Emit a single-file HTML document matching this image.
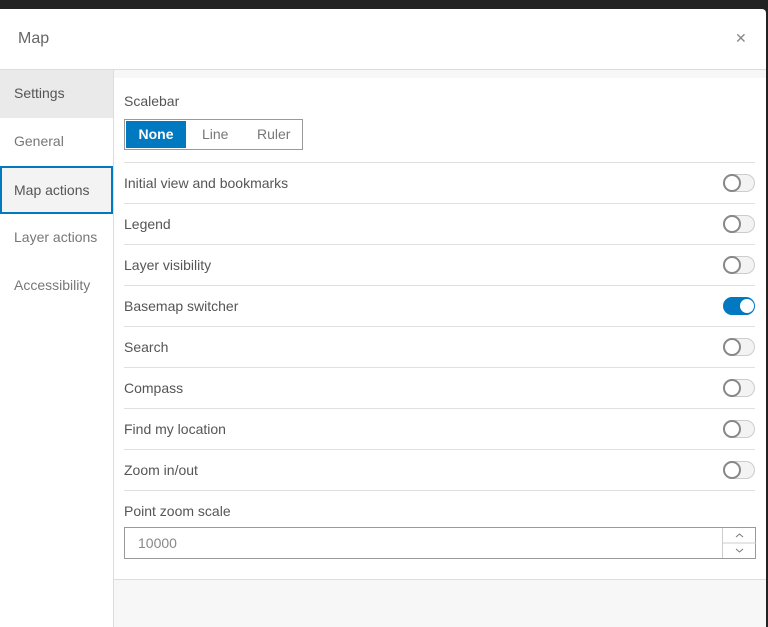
<!DOCTYPE html><html style="overflow:hidden;height:627px"><head><style>
body{margin:0;width:768px;height:627px;background:#222;font-family:"Liberation Sans",sans-serif;overflow:hidden;position:relative;color:#4a4a4a}
.dlg{position:absolute;left:0;top:9px;width:766px;height:618px;background:#fff;border-top-right-radius:4px;overflow:hidden}
.hdr{position:absolute;left:0;top:0;width:766px;height:60px;border-bottom:1px solid #ddd}
.hdr .t{position:absolute;left:18px;top:21px;font-size:16px;color:#666}
.hdr .x{position:absolute;left:735px;top:21px;font-size:14px;color:#888}
.side{position:absolute;left:0;top:61px;width:113px;height:557px;border-right:1px solid #ddd}
.side div{height:48px;line-height:46px;padding-left:14px;font-size:14px;color:#777;box-sizing:border-box}
.strip{position:absolute;left:114px;top:61px;width:652px;height:8px;background:#f7f7f7}
.foot{position:absolute;left:114px;top:570px;width:652px;height:48px;background:#f7f7f7;border-top:1px solid #ddd}
.c{position:absolute;left:124px;font-size:14px;color:#555}
.row{position:absolute;left:124px;width:631px;height:41px;border-top:1px solid #e0e0e0;font-size:14px;color:#555}
.row span{position:absolute;left:0;top:12px}
.tg{position:absolute;right:0;top:11px;width:30px;height:16px;border:1px solid #ccc;border-radius:9px;background:#f3f3f3}
.tg:before{content:"";position:absolute;left:-1px;top:-1px;width:14px;height:14px;border:2px solid #888;border-radius:50%;background:#fff}
.tg.on{background:#0079c1;border-color:#0079c1}
.tg.on:before{left:16px;top:1px;width:12px;height:12px;border:1px solid #fff}
</style></head><body>
<div class="dlg">
<div class="hdr"><div class="t">Map</div><div class="x">✕</div></div>
<div class="side">
<div style="background:#eaeaea;color:#555">Settings</div>
<div>General</div>
<div style="border:2px solid #0079c1;background:#f3f3f3;color:#555;line-height:44px;padding-left:12px">Map actions</div>
<div>Layer actions</div>
<div>Accessibility</div>
</div>
<div class="strip"></div>
<div class="c" style="top:84px">Scalebar</div>
<div style="position:absolute;left:124px;top:110px;width:177px;height:29px;border:1px solid #999;font-size:14px">
<div style="position:absolute;left:1px;top:1px;width:60px;height:27px;background:#0079c1;color:#fff;font-weight:bold;text-align:center;line-height:27px">None</div>
<div style="position:absolute;left:77px;top:6px;color:#777">Line</div>
<div style="position:absolute;left:132px;top:6px;color:#777">Ruler</div>
</div>
<div class="row" style="top:153px"><span>Initial view and bookmarks</span><div class="tg"></div></div>
<div class="row" style="top:194px"><span>Legend</span><div class="tg"></div></div>
<div class="row" style="top:235px"><span>Layer visibility</span><div class="tg"></div></div>
<div class="row" style="top:276px"><span>Basemap switcher</span><div class="tg on"></div></div>
<div class="row" style="top:317px"><span>Search</span><div class="tg"></div></div>
<div class="row" style="top:358px"><span>Compass</span><div class="tg"></div></div>
<div class="row" style="top:399px"><span>Find my location</span><div class="tg"></div></div>
<div class="row" style="top:440px"><span>Zoom in/out</span><div class="tg"></div></div>
<div class="row" style="top:481px"><span>Point zoom scale</span></div>
<div style="position:absolute;left:124px;top:518px;width:630px;height:30px;border:1px solid #999;font-size:14px;color:#888">
<div style="position:absolute;left:13px;top:7px">10000</div>
<div style="position:absolute;left:597px;top:0;width:33px;height:30px;border-left:1px solid #ccc">
<svg width="33" height="30" style="position:absolute;left:0;top:0"><line x1="0" y1="15" x2="33" y2="15" stroke="#ccc"/><path d="M13 9 L16.5 6 L20 9" fill="none" stroke="#777"/><path d="M13 21 L16.5 24 L20 21" fill="none" stroke="#777"/></svg>
</div>
</div>
<div class="foot"></div>
</div>
</body></html>
